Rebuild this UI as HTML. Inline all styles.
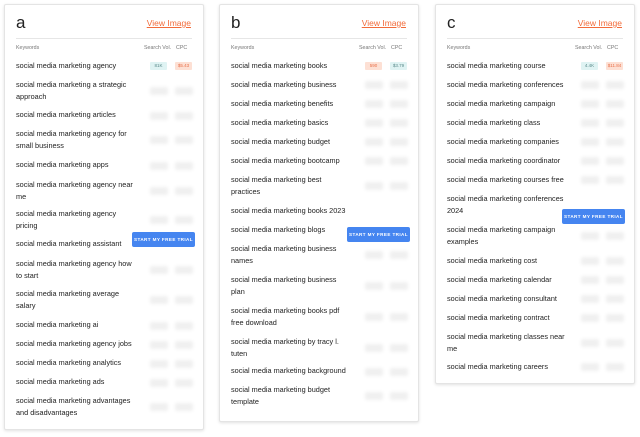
<!DOCTYPE html>
<html><head><meta charset="utf-8"><style>
*{margin:0;padding:0;box-sizing:border-box}
body{width:640px;height:437px;background:#fff;position:relative;overflow:hidden;font-family:"Liberation Sans",sans-serif;color:#222}
.card{position:absolute;background:#fff;border:1px solid #e4e4e4;border-radius:2px;box-shadow:0 1px 3px rgba(0,0,0,.12)}
.t{position:absolute;left:11px;top:8px;font-size:17px;color:#222}
.v{position:absolute;right:12px;top:13px;font-size:8.5px;color:#f26b3a;text-decoration:underline}
.hr{position:absolute;left:11px;right:11px;top:33px;border-top:1px solid #e6e6e6}
.h{position:absolute;top:40px;font-size:5.3px;color:#777;white-space:nowrap}
.r{position:absolute;left:11px;white-space:nowrap;font-size:7.3px;line-height:11.5px;color:#222}
.b{position:absolute;width:18px;height:8px;border-radius:2px;background:#f0f0f0;filter:blur(1.5px)}
.p{position:absolute;width:17px;height:8px;font-size:4.5px;line-height:8px;text-align:center;border-radius:1px}
.tl{background:#dff3f3;color:#5a8a8a}.or{background:#fde0d4;color:#e8704a}
.btn{position:absolute;width:63px;height:15px;background:#4585f0;border-radius:2px;color:#fff;font-size:4.6px;font-weight:bold;letter-spacing:.4px;text-align:center;line-height:15px}
</style></head><body>

<div class="card" style="left:4px;top:4px;width:200px;height:426px">
<div class="t">a</div><div class="v">View Image</div><div class="hr"></div>
<div class="h" style="left:11px">Keywords</div><div class="h" style="left:139px">Search Vol.</div><div class="h" style="left:171px">CPC</div>
<div class="r" style="top:55px">social media marketing agency</div>
<div class="p tl" style="left:145px;top:57px">81K</div><div class="p or" style="left:170px;top:57px">$5.43</div>
<div class="r" style="top:74px">social media marketing a strategic<br>approach</div>
<div class="r" style="top:104px">social media marketing articles</div>
<div class="r" style="top:123px">social media marketing agency for<br>small business</div>
<div class="r" style="top:154px">social media marketing apps</div>
<div class="r" style="top:174px">social media marketing agency near<br>me</div>
<div class="r" style="top:203px">social media marketing agency<br>pricing</div>
<div class="r" style="top:233px">social media marketing assistant</div>
<div class="r" style="top:253px">social media marketing agency how<br>to start</div>
<div class="r" style="top:283px">social media marketing average<br>salary</div>
<div class="r" style="top:314px">social media marketing ai</div>
<div class="r" style="top:333px">social media marketing agency jobs</div>
<div class="r" style="top:352px">social media marketing analytics</div>
<div class="r" style="top:371px">social media marketing ads</div>
<div class="r" style="top:390px">social media marketing advantages<br>and disadvantages</div>
<div class="b" style="left:145px;top:82px"></div><div class="b" style="left:170px;top:82px"></div>
<div class="b" style="left:145px;top:107px"></div><div class="b" style="left:170px;top:107px"></div>
<div class="b" style="left:145px;top:131px"></div><div class="b" style="left:170px;top:131px"></div>
<div class="b" style="left:145px;top:157px"></div><div class="b" style="left:170px;top:157px"></div>
<div class="b" style="left:145px;top:182px"></div><div class="b" style="left:170px;top:182px"></div>
<div class="b" style="left:145px;top:211px"></div><div class="b" style="left:170px;top:211px"></div>
<div class="b" style="left:145px;top:261px"></div><div class="b" style="left:170px;top:261px"></div>
<div class="b" style="left:145px;top:291px"></div><div class="b" style="left:170px;top:291px"></div>
<div class="b" style="left:145px;top:317px"></div><div class="b" style="left:170px;top:317px"></div>
<div class="b" style="left:145px;top:336px"></div><div class="b" style="left:170px;top:336px"></div>
<div class="b" style="left:145px;top:355px"></div><div class="b" style="left:170px;top:355px"></div>
<div class="b" style="left:145px;top:374px"></div><div class="b" style="left:170px;top:374px"></div>
<div class="b" style="left:145px;top:398px"></div><div class="b" style="left:170px;top:398px"></div>
<div class="btn" style="left:127px;top:227px">START MY FREE TRIAL</div>
</div>

<div class="card" style="left:219px;top:4px;width:200px;height:418px">
<div class="t">b</div><div class="v">View Image</div><div class="hr"></div>
<div class="h" style="left:11px">Keywords</div><div class="h" style="left:139px">Search Vol.</div><div class="h" style="left:171px">CPC</div>
<div class="r" style="top:55px">social media marketing books</div>
<div class="p or" style="left:145px;top:57px">590</div><div class="p tl" style="left:170px;top:57px">$3.79</div>
<div class="r" style="top:74px">social media marketing business</div>
<div class="r" style="top:93px">social media marketing benefits</div>
<div class="r" style="top:112px">social media marketing basics</div>
<div class="r" style="top:131px">social media marketing budget</div>
<div class="r" style="top:150px">social media marketing bootcamp</div>
<div class="r" style="top:169px">social media marketing best<br>practices</div>
<div class="r" style="top:200px">social media marketing books 2023</div>
<div class="r" style="top:219px">social media marketing blogs</div>
<div class="r" style="top:238px">social media marketing business<br>names</div>
<div class="r" style="top:269px">social media marketing business<br>plan</div>
<div class="r" style="top:300px">social media marketing books pdf<br>free download</div>
<div class="r" style="top:331px">social media marketing by tracy l.<br>tuten</div>
<div class="r" style="top:360px">social media marketing background</div>
<div class="r" style="top:379px">social media marketing budget<br>template</div>
<div class="b" style="left:145px;top:76px"></div><div class="b" style="left:170px;top:76px"></div>
<div class="b" style="left:145px;top:95px"></div><div class="b" style="left:170px;top:95px"></div>
<div class="b" style="left:145px;top:114px"></div><div class="b" style="left:170px;top:114px"></div>
<div class="b" style="left:145px;top:133px"></div><div class="b" style="left:170px;top:133px"></div>
<div class="b" style="left:145px;top:152px"></div><div class="b" style="left:170px;top:152px"></div>
<div class="b" style="left:145px;top:177px"></div><div class="b" style="left:170px;top:177px"></div>
<div class="b" style="left:145px;top:246px"></div><div class="b" style="left:170px;top:246px"></div>
<div class="b" style="left:145px;top:277px"></div><div class="b" style="left:170px;top:277px"></div>
<div class="b" style="left:145px;top:308px"></div><div class="b" style="left:170px;top:308px"></div>
<div class="b" style="left:145px;top:339px"></div><div class="b" style="left:170px;top:339px"></div>
<div class="b" style="left:145px;top:363px"></div><div class="b" style="left:170px;top:363px"></div>
<div class="b" style="left:145px;top:387px"></div><div class="b" style="left:170px;top:387px"></div>
<div class="btn" style="left:127px;top:222px">START MY FREE TRIAL</div>
</div>

<div class="card" style="left:435px;top:4px;width:200px;height:380px">
<div class="t">c</div><div class="v">View Image</div><div class="hr"></div>
<div class="h" style="left:11px">Keywords</div><div class="h" style="left:139px">Search Vol.</div><div class="h" style="left:171px">CPC</div>
<div class="r" style="top:55px">social media marketing course</div>
<div class="p tl" style="left:145px;top:57px">4.4K</div><div class="p or" style="left:170px;top:57px">$11.84</div>
<div class="r" style="top:74px">social media marketing conferences</div>
<div class="r" style="top:93px">social media marketing campaign</div>
<div class="r" style="top:112px">social media marketing class</div>
<div class="r" style="top:131px">social media marketing companies</div>
<div class="r" style="top:150px">social media marketing coordinator</div>
<div class="r" style="top:169px">social media marketing courses free</div>
<div class="r" style="top:188px">social media marketing conferences<br>2024</div>
<div class="r" style="top:219px">social media marketing campaign<br>examples</div>
<div class="r" style="top:250px">social media marketing cost</div>
<div class="r" style="top:269px">social media marketing calendar</div>
<div class="r" style="top:288px">social media marketing consultant</div>
<div class="r" style="top:307px">social media marketing contract</div>
<div class="r" style="top:326px">social media marketing classes near<br>me</div>
<div class="r" style="top:356px">social media marketing careers</div>
<div class="b" style="left:145px;top:76px"></div><div class="b" style="left:170px;top:76px"></div>
<div class="b" style="left:145px;top:95px"></div><div class="b" style="left:170px;top:95px"></div>
<div class="b" style="left:145px;top:114px"></div><div class="b" style="left:170px;top:114px"></div>
<div class="b" style="left:145px;top:133px"></div><div class="b" style="left:170px;top:133px"></div>
<div class="b" style="left:145px;top:152px"></div><div class="b" style="left:170px;top:152px"></div>
<div class="b" style="left:145px;top:171px"></div><div class="b" style="left:170px;top:171px"></div>
<div class="b" style="left:145px;top:227px"></div><div class="b" style="left:170px;top:227px"></div>
<div class="b" style="left:145px;top:252px"></div><div class="b" style="left:170px;top:252px"></div>
<div class="b" style="left:145px;top:271px"></div><div class="b" style="left:170px;top:271px"></div>
<div class="b" style="left:145px;top:290px"></div><div class="b" style="left:170px;top:290px"></div>
<div class="b" style="left:145px;top:309px"></div><div class="b" style="left:170px;top:309px"></div>
<div class="b" style="left:145px;top:334px"></div><div class="b" style="left:170px;top:334px"></div>
<div class="b" style="left:145px;top:358px"></div><div class="b" style="left:170px;top:358px"></div>
<div class="btn" style="left:126px;top:204px">START MY FREE TRIAL</div>
</div>

</body></html>
